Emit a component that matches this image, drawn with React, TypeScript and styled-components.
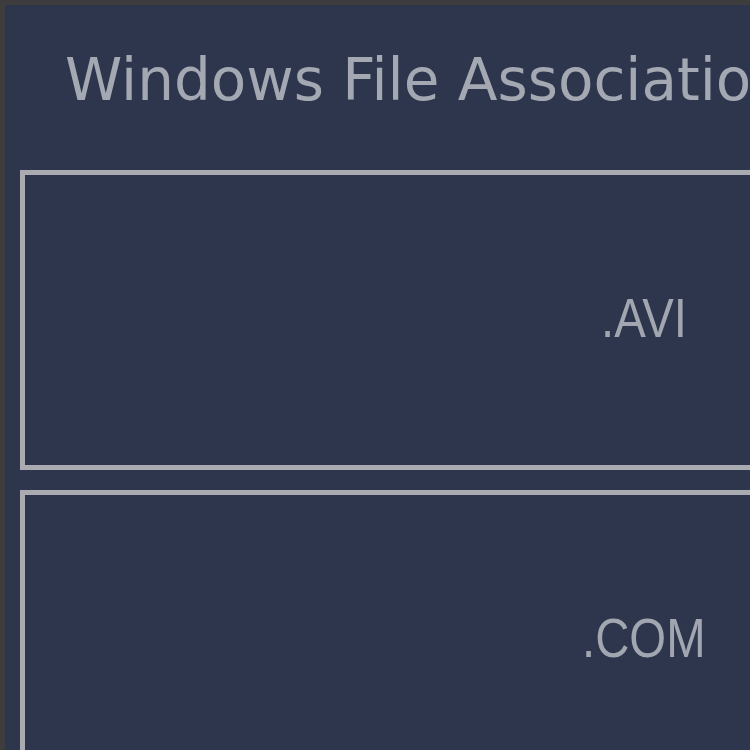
import React from "react";
import styled, { createGlobalStyle } from "styled-components";

const GlobalStyle = createGlobalStyle`
  html, body {
    margin: 0;
    padding: 0;
    background: #2d364c;
    overflow: hidden;
  }
`;

const Frame = styled.div`
  box-sizing: border-box;
  width: 1282px;
  min-height: 760px;
  border-top: 5px solid #3d3d3d;
  border-left: 5px solid #3d3d3d;
  background: #2d364c;
  padding: 0 15px;
`;

const Title = styled.h1`
  margin: 0;
  padding: 46px 0 0 45px;
  height: 165px;
  box-sizing: border-box;
  font-family: "DejaVu Sans", Verdana, sans-serif;
  font-weight: normal;
  font-size: 58px;
  line-height: 58px;
  color: #a4a8b2;
  white-space: nowrap;
`;

const List = styled.div`
  display: flex;
  flex-direction: column;
  gap: 20px;
`;

const Entry = styled.div`
  box-sizing: border-box;
  height: 300px;
  border: 5px solid #a9abb1;
  display: flex;
  align-items: center;
  justify-content: center;
`;

/* Narrow label face: Arial metrics squeezed horizontally */
const Label = styled.span`
  display: inline-block;
  font-family: "Liberation Sans", Arial, sans-serif;
  font-size: 55px;
  line-height: 1;
  color: #a2a6b0;
  transform: scaleX(0.86);
  transform-origin: center;
  margin-top: -3px;
`;

const extensions = [".AVI", ".COM", ".EXE"];

export default function App() {
  return (
    <>
      <GlobalStyle />
      <Frame>
        <Title>Windows File Associations</Title>
        <List>
          {extensions.map((ext) => (
            <Entry key={ext}>
              <Label>{ext}</Label>
            </Entry>
          ))}
        </List>
      </Frame>
    </>
  );
}
